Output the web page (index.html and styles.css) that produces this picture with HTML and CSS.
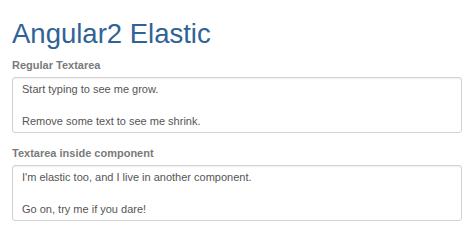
FILE: index.html
```html
<!DOCTYPE html>
<html lang="en">
<head>
<meta charset="utf-8">
<title>Angular2 Elastic</title>
<link rel="stylesheet" href="styles.css">
</head>
<body>
<div class="container">
  <h1 class="title">Angular2 Elastic</h1>
  <div class="form-group">
    <label class="label">Regular Textarea</label>
    <div class="field">Start typing to see me grow.

Remove some text to see me shrink.</div>
  </div>
  <div class="form-group">
    <label class="label">Textarea inside component</label>
    <div class="field">I'm elastic too, and I live in another component.

Go on, try me if you dare!</div>
  </div>
</div>
</body>
</html>
```

FILE: styles.css
```css
html, body {
  margin: 0;
  padding: 0;
  background: #ffffff;
}
body {
  font-family: "Liberation Sans", Arial, Helvetica, sans-serif;
  font-size: 11px;
  line-height: 16px;
  color: #333333;
}
.container {
  padding: 0 12px;
}
.title {
  font-size: 27.5px;
  line-height: 31px;
  font-weight: normal;
  color: #2f6397;
  margin: 18px 0 8px;
}
.form-group {
  margin-bottom: 12px;
}
.label {
  display: block;
  font-weight: bold;
  color: #7a7a7a;
  margin-bottom: 4px;
}
.field {
  box-sizing: border-box;
  height: 56px;
  padding: 3px 9px;
  border: 1px solid #d2d2d2;
  border-radius: 3px;
  box-shadow: inset 0 1px 1px rgba(0, 0, 0, 0.06);
  color: #555555;
  white-space: pre-line;
}
```
